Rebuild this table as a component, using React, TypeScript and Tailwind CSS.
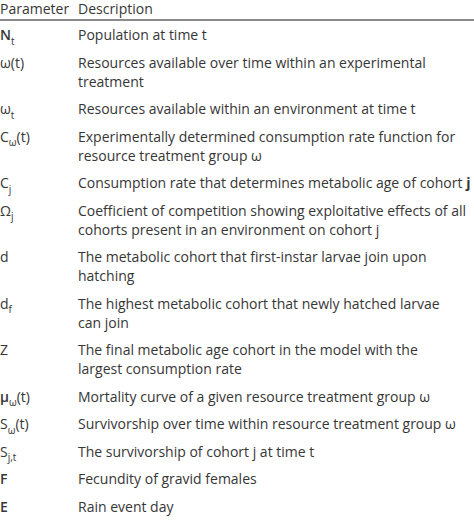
import React from 'react';

type Row = {
  param: React.ReactNode;
  lines: React.ReactNode[];
};

const Sub = ({ children }: { children: React.ReactNode }) => (
  <sub className="text-[10px] align-[-2px] leading-none">{children}</sub>
);

const rows: Row[] = [
  { param: <><span className="font-semibold">N</span><Sub>t</Sub></>, lines: ['Population at time t'] },
  {
    param: 'ω(t)',
    lines: ['Resources available over time within an experimental', 'treatment'],
  },
  { param: <>ω<Sub>t</Sub></>, lines: ['Resources available within an environment at time t'] },
  {
    param: <>C<Sub>ω</Sub>(t)</>,
    lines: ['Experimentally determined consumption rate function for', 'resource treatment group ω'],
  },
  {
    param: <>C<Sub>j</Sub></>,
    lines: [<>Consumption rate that determines metabolic age of cohort <span className="font-bold">j</span></>],
  },
  {
    param: <>Ω<Sub>j</Sub></>,
    lines: ['Coefficient of competition showing exploitative effects of all', 'cohorts present in an environment on cohort j'],
  },
  {
    param: 'd',
    lines: ['The metabolic cohort that first-instar larvae join upon', 'hatching'],
  },
  {
    param: <>d<Sub>f</Sub></>,
    lines: ['The highest metabolic cohort that newly hatched larvae', 'can join'],
  },
  {
    param: 'Z',
    lines: ['The final metabolic age cohort in the model with the', 'largest consumption rate'],
  },
  { param: <><span className="font-semibold">μ</span><Sub>ω</Sub>(t)</>, lines: ['Mortality curve of a given resource treatment group ω'] },
  { param: <>S<Sub>ω</Sub>(t)</>, lines: ['Survivorship over time within resource treatment group ω'] },
  { param: <>S<Sub>j,t</Sub></>, lines: ['The survivorship of cohort j at time t'] },
  { param: <span className="font-semibold">F</span>, lines: ['Fecundity of gravid females'] },
  { param: <span className="font-semibold">E</span>, lines: ['Rain event day'] },
];

export default function App() {
  return (
    <div
      className="w-[474px] h-[520px] overflow-hidden bg-white text-[#363636] text-[14px]"
      style={{ fontFamily: '"Open Sans", Lato, sans-serif' }}
    >
      <div className="flex h-[21px] items-start border-b-2 border-[#8a8a8a] leading-[18px]">
        <div className="w-[78px] shrink-0">Parameter</div>
        <div>Description</div>
      </div>
      {rows.map((r, i) => (
        <div key={i} className="flex py-[4.25px] leading-[19px]">
          <div className="w-[78px] shrink-0 whitespace-nowrap">{r.param}</div>
          <div className="whitespace-nowrap">
            {r.lines.map((l, j) => (
              <div key={j}>{l}</div>
            ))}
          </div>
        </div>
      ))}
    </div>
  );
}
